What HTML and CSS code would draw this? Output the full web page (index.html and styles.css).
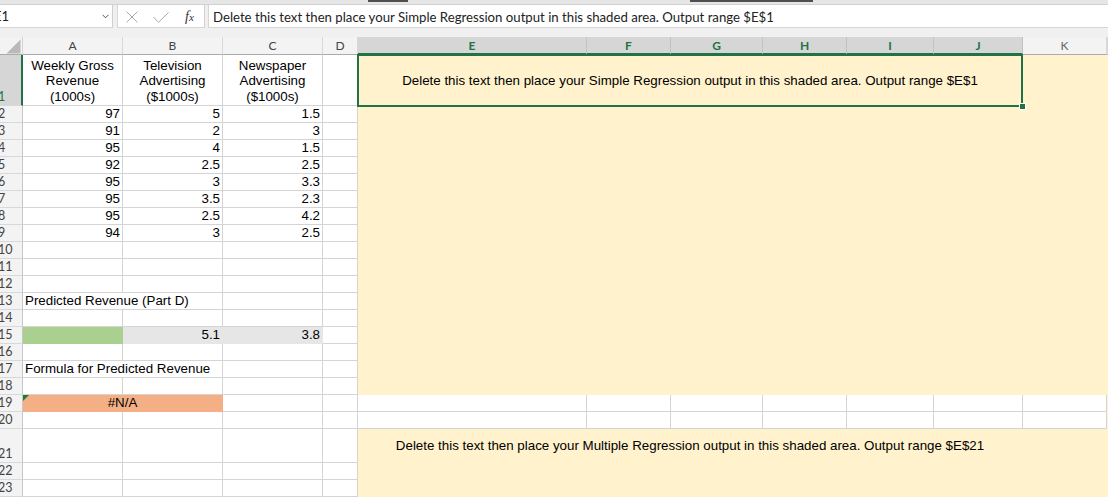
FILE: index.html
```html
<!DOCTYPE html>
<html>
<head>
<meta charset="utf-8">
<link rel="stylesheet" href="styles.css">
</head>
<body>
<div class="topstrip"><div class="tab tab1"></div><div class="tab tab2"></div></div>
<div class="fbar">
  <div class="namebox"><span class="nb-text">E1</span><svg class="chev" width="7" height="5" viewBox="0 0 7 5"><path d="M0.5 0.8 L3.5 3.8 L6.5 0.8" fill="none" stroke="#555" stroke-width="1"/></svg></div>
  <div class="fnbox">
    <svg class="ico-x" width="12" height="12" viewBox="0 0 12 12"><path d="M0.5 0.5 L11.5 11.5 M11.5 0.5 L0.5 11.5" fill="none" stroke="#a8a8a8" stroke-width="1"/></svg>
    <svg class="ico-check" width="16" height="11" viewBox="0 0 16 11"><path d="M0.5 5 L5.5 10.3 L15.5 0.5" fill="none" stroke="#a8a8a8" stroke-width="1"/></svg>
    <span class="fx"><i>f</i><i class="fx-x">x</i></span>
  </div>
  <div class="formula">Delete this text then place your Simple Regression output in this shaded area. Output range $E$1</div>
</div>
<div class="gap"></div>
<div class="sheet">
  <div class="corner"><svg width="22" height="17" viewBox="0 0 22 17"><polygon points="20.5,2.5 20.5,16.5 6.5,16.5" fill="#b9b9b9"/></svg></div>
  <div class="ch">A</div><div class="ch">B</div><div class="ch">C</div><div class="ch">D</div>
  <div class="ch sel">E</div><div class="ch sel">F</div><div class="ch sel">G</div><div class="ch sel">H</div><div class="ch sel">I</div><div class="ch sel">J</div>
  <div class="ch kh">K</div><div class="ch"></div>

  <div class="y blk-k1"></div>
  <div class="y blk-l"></div>
  <div class="y blk-e2"></div>
  <div class="y blk-e22"></div>
  <div class="y blk-k21"></div>
  <div class="c y e21 mid ctr">Delete this text then place your Multiple Regression output in this shaded area. Output range $E$21</div>

  <div class="rh sel"><span>1</span></div>
  <div class="c ctr wrap">Weekly Gross<br>Revenue<br>(1000s)</div>
  <div class="c ctr wrap">Television<br>Advertising<br>($1000s)</div>
  <div class="c ctr wrap">Newspaper<br>Advertising<br>($1000s)</div>
  <div class="c"></div>
  <div class="c y e1 mid ctr">Delete this text then place your Simple Regression output in this shaded area. Output range $E$1<div class="selbox"><div class="handle"></div></div></div>

  <div class="rh"><span>2</span></div><div class="c r">97</div><div class="c r">5</div><div class="c r">1.5</div><div class="c"></div>
  <div class="rh"><span>3</span></div><div class="c r">91</div><div class="c r">2</div><div class="c r">3</div><div class="c"></div>
  <div class="rh"><span>4</span></div><div class="c r">95</div><div class="c r">4</div><div class="c r">1.5</div><div class="c"></div>
  <div class="rh"><span>5</span></div><div class="c r">92</div><div class="c r">2.5</div><div class="c r">2.5</div><div class="c"></div>
  <div class="rh"><span>6</span></div><div class="c r">95</div><div class="c r">3</div><div class="c r">3.3</div><div class="c"></div>
  <div class="rh"><span>7</span></div><div class="c r">95</div><div class="c r">3.5</div><div class="c r">2.3</div><div class="c"></div>
  <div class="rh"><span>8</span></div><div class="c r">95</div><div class="c r">2.5</div><div class="c r">4.2</div><div class="c"></div>
  <div class="rh"><span>9</span></div><div class="c r">94</div><div class="c r">3</div><div class="c r">2.5</div><div class="c"></div>
  <div class="rh"><span>10</span></div><div class="c"></div><div class="c"></div><div class="c"></div><div class="c"></div>
  <div class="rh"><span>11</span></div><div class="c"></div><div class="c"></div><div class="c"></div><div class="c"></div>
  <div class="rh"><span>12</span></div><div class="c"></div><div class="c"></div><div class="c"></div><div class="c"></div>
  <div class="rh"><span>13</span></div><div class="c span2">Predicted Revenue (Part D)</div><div class="c"></div><div class="c"></div>
  <div class="rh"><span>14</span></div><div class="c"></div><div class="c"></div><div class="c"></div><div class="c"></div>
  <div class="rh"><span>15</span></div><div class="c green"></div><div class="c r gray">5.1</div><div class="c r gray">3.8</div><div class="c"></div>
  <div class="rh"><span>16</span></div><div class="c"></div><div class="c"></div><div class="c"></div><div class="c"></div>
  <div class="rh"><span>17</span></div><div class="c span2">Formula for Predicted Revenue</div><div class="c"></div><div class="c"></div>
  <div class="rh"><span>18</span></div><div class="c"></div><div class="c"></div><div class="c"></div><div class="c"></div>
  <div class="rh"><span>19</span></div><div class="c span2 ctr orange err">#N/A</div><div class="c"></div><div class="c"></div>
  <div class="c"></div><div class="c"></div><div class="c"></div><div class="c"></div><div class="c"></div><div class="c"></div><div class="c"></div>
  <div class="rh"><span>20</span></div><div class="c"></div><div class="c"></div><div class="c"></div><div class="c"></div>
  <div class="c"></div><div class="c"></div><div class="c"></div><div class="c"></div><div class="c"></div><div class="c"></div><div class="c"></div>
  <div class="rh"><span>21</span></div><div class="c"></div><div class="c"></div><div class="c"></div><div class="c"></div>
  <div class="rh"><span>22</span></div><div class="c"></div><div class="c"></div><div class="c"></div><div class="c"></div>
  <div class="rh"><span>23</span></div><div class="c"></div><div class="c"></div><div class="c"></div><div class="c"></div>
</div>
</body>
</html>
```

FILE: styles.css
```css
* { box-sizing: border-box; }
html, body { margin: 0; padding: 0; }
body {
  width: 1108px;
  height: 497px;
  overflow: hidden;
  background: #ffffff;
  font-family: "Liberation Sans", Arial, sans-serif;
}

/* top strip */
.topstrip {
  height: 5px;
  background: #e6e6e6;
  border-bottom: 1px solid #d2d2d2;
  display: flex;
  align-items: flex-start;
}
.tab { height: 2px; background: #4f4f4f; }
.tab1 { margin-left: 368px; width: 40px; }
.tab2 { margin-left: 282px; width: 123px; }

/* formula bar */
.fbar {
  height: 23px;
  display: flex;
  background: #f0f0f0;
}
.namebox {
  width: 113px;
  background: #ffffff;
  border-right: 1px solid #d0d0d0;
  border-bottom: 1px solid #d6d6d6;
  display: flex;
  align-items: center;
  justify-content: space-between;
  overflow: hidden;
  font-family: Lato, "Open Sans", sans-serif;
  font-size: 13px;
  color: #222;
  padding-right: 3px;
}
.nb-text { margin-left: -6px; }
.chev { margin-top: 1px; }
.fnbox {
  width: 88px;
  margin-left: 4px;
  background: #ffffff;
  border-left: 1px solid #d6d6d6;
  border-right: 1px solid #d0d0d0;
  border-bottom: 1px solid #d6d6d6;
  display: flex;
  align-items: center;
  padding-top: 2px;
}
.ico-x { margin-left: 8px; }
.ico-check { margin-left: 15px; }
.fx {
  margin-left: 16px;
  font-family: "Liberation Serif", serif;
  font-size: 14px;
  color: #333;
  line-height: 14px;
}
.fx-x { font-size: 11px; }
.formula {
  flex: 1;
  margin-left: 3px;
  background: #ffffff;
  border-left: 1px solid #d6d6d6;
  border-bottom: 1px solid #d6d6d6;
  display: flex;
  align-items: center;
  padding-left: 4px;
  padding-top: 1px;
  font-family: Lato, "Open Sans", sans-serif;
  font-size: 13.2px;
  color: #222;
  white-space: nowrap;
  overflow: hidden;
}
.gap {
  height: 9px;
  background: #f0f0f0;
}

/* grid sheet */
.sheet {
  display: grid;
  grid-template-columns: 23px 100px 100px 100px 35px 229px 84px 92px 84px 87px 89px 84px 1fr;
  grid-template-rows: 18px 51px repeat(19, 17px) 34px 17px 17px;
  width: 1108px;
}
.corner {
  background: #f3f3f3;
  border-right: 1px solid #d4d4d4;
  border-bottom: 1px solid #ababab;
}
.corner svg { display: block; }
.ch {
  background: #f3f3f3;
  border-right: 1px solid #d8d8d8;
  border-bottom: 1px solid #ababab;
  display: flex;
  align-items: center;
  justify-content: center;
  font-family: Lato, "Open Sans", sans-serif;
  font-size: 12px;
  color: #444;
}
.ch.sel {
  background: #d6d6d6;
  color: #217346;
  font-weight: 700;
  border-right-color: #c2c2c2;
  border-bottom: 2px solid #217346;
}
.ch.kh { color: #666; }

.rh {
  background: #f3f3f3;
  border-right: 1px solid #c6c6c6;
  border-bottom: 1px solid #d8d8d8;
  display: flex;
  align-items: flex-end;
  overflow: hidden;
  padding-bottom: 1px;
  font-family: Lato, "Open Sans", sans-serif;
  font-size: 12.5px;
  line-height: 15px;
  color: #444;
}
.rh span { margin-left: -2px; }
.rh.sel {
  background: #d6d6d6;
  color: #217346;
  border-right: 2px solid #217346;
}

.c {
  background: #ffffff;
  border-right: 1px solid #d4d4d4;
  border-bottom: 1px solid #d4d4d4;
  display: flex;
  align-items: flex-end;
  padding: 0 2px 1px 2px;
  font-size: 13.33px;
  line-height: 15px;
  color: #000;
  white-space: nowrap;
}
.r { justify-content: flex-end; }
.ctr { justify-content: center; text-align: center; }
.wrap { white-space: normal; line-height: 15.5px; }
.mid { align-items: center; }
.span2 { grid-column: span 2; }

.y { background: #fff2cc; border-color: transparent; }
.green { background: #a9d08e; border-color: transparent; }
.gray { background: #e7e6e6; border-color: transparent; }
.orange { background: #f4b084; border-color: transparent; }

.err { position: relative; }
.err::before {
  content: "";
  position: absolute;
  left: 0;
  top: 0;
  width: 0;
  height: 0;
  border-top: 6px solid #1e7b3c;
  border-right: 6px solid transparent;
}

.e1 { grid-column: 6 / 12; grid-row: 2; position: relative; padding-top: 1px; }
.blk-e2 { grid-column: 6 / 12; grid-row: 3 / 20; }
.blk-k1 { grid-column: 12; grid-row: 2 / 20; }
.blk-l { grid-column: 13; grid-row: 2 / 25; }
.e21 { grid-column: 6 / 12; grid-row: 22; }
.blk-e22 { grid-column: 6 / 12; grid-row: 23 / 25; }
.blk-k21 { grid-column: 12; grid-row: 22 / 25; }

.selbox {
  position: absolute;
  left: -1px;
  top: -1px;
  right: -1px;
  bottom: -2px;
  border: 2px solid #217346;
}
.handle {
  position: absolute;
  right: -5px;
  bottom: -5px;
  width: 7px;
  height: 7px;
  background: #217346;
  border: 1px solid #ffffff;
}
```
